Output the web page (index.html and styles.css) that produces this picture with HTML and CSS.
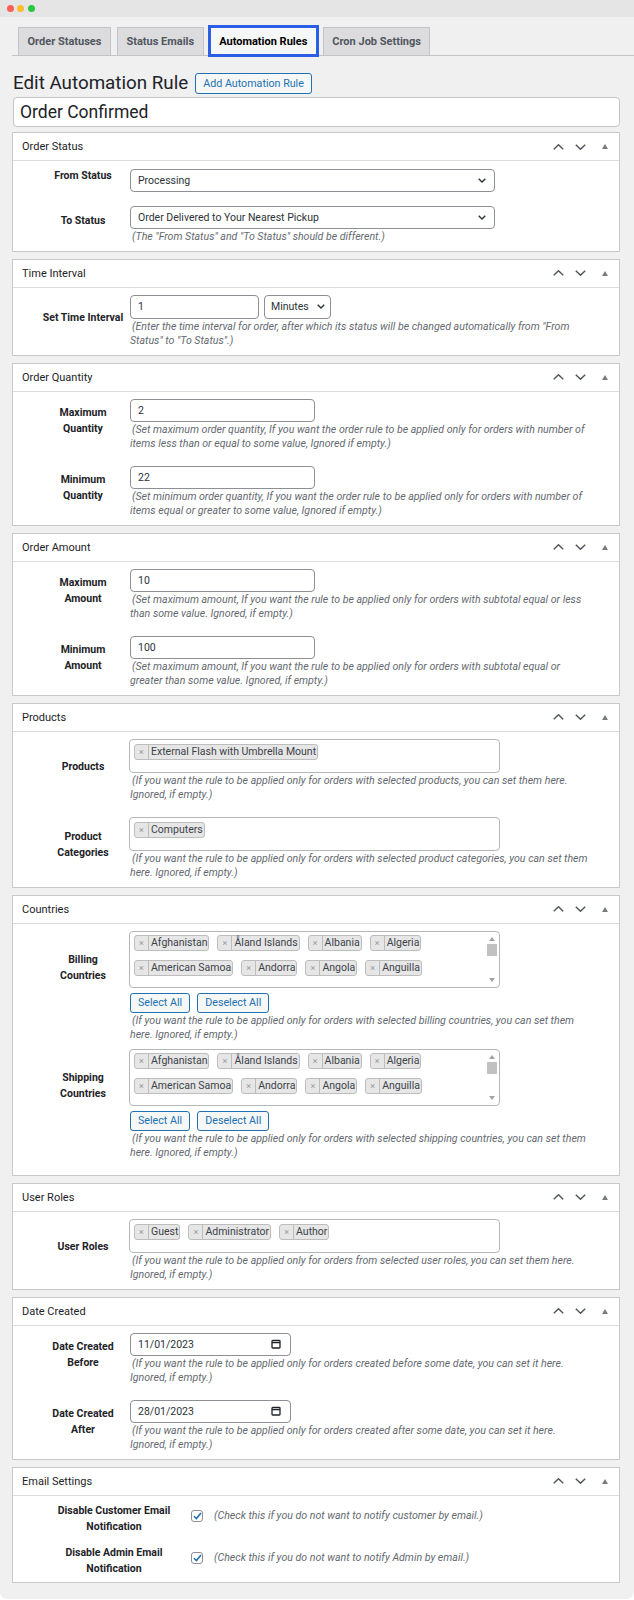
FILE: index.html
```html
<!DOCTYPE html>
<html>
  <head>
    <meta charset="UTF-8">
    <title>Edit Automation Rule</title>
    <link rel="stylesheet" href="styles.css">
  </head>
  <body>
    <div class="window">
      <div class="titlebar">
        <span class="light red"></span><span class="light yellow"></span><span class="light green"></span>
      </div>

      <div id="wpbody">
        <nav class="nav-tab-wrapper">
          <a class="nav-tab">Order Statuses</a>
          <a class="nav-tab">Status Emails</a>
          <a class="nav-tab nav-tab-active">Automation Rules</a>
          <a class="nav-tab">Cron Job Settings</a>
        </nav>

        <div class="page-title">
          <h1>Edit Automation Rule</h1>
          <a class="button">Add Automation Rule</a>
        </div>
        <input id="title" type="text" value="Order Confirmed">

        <!-- Order Status -->
        <div class="postbox">
          <div class="postbox-header">
            <h2>Order Status</h2>
            <div class="handle-actions">
              <svg class="arrow" width="11" height="6" viewBox="0 0 11 6"><path d="M0.8 5.3 5.5 0.8 10.2 5.3"/></svg>
              <svg class="arrow" width="11" height="6" viewBox="0 0 11 6"><path d="M0.8 0.7 5.5 5.2 10.2 0.7"/></svg>
              <svg class="toggle" width="6" height="5" viewBox="0 0 6 5"><path d="M0 5 3 0 6 5Z"/></svg>
            </div>
          </div>
          <div class="inside">
            <div class="field">
              <label class="field-label">From Status</label>
              <div class="field-control">
                <div class="select wide">
                  <select><option>Processing</option></select>
                  <svg width="8" height="5" viewBox="0 0 8 5"><path d="M0.7 0.7 4 4 7.3 0.7"/></svg>
                </div>
              </div>
            </div>
            <div class="field">
              <label class="field-label">To Status</label>
              <div class="field-control">
                <div class="select wide">
                  <select><option>Order Delivered to Your Nearest Pickup</option></select>
                  <svg width="8" height="5" viewBox="0 0 8 5"><path d="M0.7 0.7 4 4 7.3 0.7"/></svg>
                </div>
                <p class="description">(The "From Status" and "To Status" should be different.)</p>
              </div>
            </div>
          </div>
        </div>

        <!-- Time Interval -->
        <div class="postbox">
          <div class="postbox-header">
            <h2>Time Interval</h2>
            <div class="handle-actions">
              <svg class="arrow" width="11" height="6" viewBox="0 0 11 6"><path d="M0.8 5.3 5.5 0.8 10.2 5.3"/></svg>
              <svg class="arrow" width="11" height="6" viewBox="0 0 11 6"><path d="M0.8 0.7 5.5 5.2 10.2 0.7"/></svg>
              <svg class="toggle" width="6" height="5" viewBox="0 0 6 5"><path d="M0 5 3 0 6 5Z"/></svg>
            </div>
          </div>
          <div class="inside">
            <div class="field">
              <label class="field-label">Set Time Interval</label>
              <div class="field-control">
                <div class="inline">
                  <input class="text-input interval" type="text" value="1">
                  <div class="select units">
                    <select><option>Minutes</option></select>
                    <svg width="8" height="5" viewBox="0 0 8 5"><path d="M0.7 0.7 4 4 7.3 0.7"/></svg>
                  </div>
                </div>
                <p class="description">(Enter the time interval for order, after which its status will be changed automatically from "From Status" to "To Status".)</p>
              </div>
            </div>
          </div>
        </div>

        <!-- Order Quantity -->
        <div class="postbox">
          <div class="postbox-header">
            <h2>Order Quantity</h2>
            <div class="handle-actions">
              <svg class="arrow" width="11" height="6" viewBox="0 0 11 6"><path d="M0.8 5.3 5.5 0.8 10.2 5.3"/></svg>
              <svg class="arrow" width="11" height="6" viewBox="0 0 11 6"><path d="M0.8 0.7 5.5 5.2 10.2 0.7"/></svg>
              <svg class="toggle" width="6" height="5" viewBox="0 0 6 5"><path d="M0 5 3 0 6 5Z"/></svg>
            </div>
          </div>
          <div class="inside">
            <div class="field">
              <label class="field-label">Maximum<br>Quantity</label>
              <div class="field-control">
                <input class="text-input number" type="text" value="2">
                <p class="description">(Set maximum order quantity, If you want the order rule to be applied only for orders with number of items less than or equal to some value, Ignored if empty.)</p>
              </div>
            </div>
            <div class="field">
              <label class="field-label">Minimum<br>Quantity</label>
              <div class="field-control">
                <input class="text-input number" type="text" value="22">
                <p class="description">(Set minimum order quantity, If you want the order rule to be applied only for orders with number of items equal or greater to some value, Ignored if empty.)</p>
              </div>
            </div>
          </div>
        </div>

        <!-- Order Amount -->
        <div class="postbox">
          <div class="postbox-header">
            <h2>Order Amount</h2>
            <div class="handle-actions">
              <svg class="arrow" width="11" height="6" viewBox="0 0 11 6"><path d="M0.8 5.3 5.5 0.8 10.2 5.3"/></svg>
              <svg class="arrow" width="11" height="6" viewBox="0 0 11 6"><path d="M0.8 0.7 5.5 5.2 10.2 0.7"/></svg>
              <svg class="toggle" width="6" height="5" viewBox="0 0 6 5"><path d="M0 5 3 0 6 5Z"/></svg>
            </div>
          </div>
          <div class="inside">
            <div class="field">
              <label class="field-label">Maximum<br>Amount</label>
              <div class="field-control">
                <input class="text-input number" type="text" value="10">
                <p class="description">(Set maximum amount, If you want the rule to be applied only for orders with subtotal equal or less than some value. Ignored, if empty.)</p>
              </div>
            </div>
            <div class="field">
              <label class="field-label">Minimum<br>Amount</label>
              <div class="field-control">
                <input class="text-input number" type="text" value="100">
                <p class="description">(Set maximum amount, If you want the rule to be applied only for orders with subtotal equal or greater than some value. Ignored, if empty.)</p>
              </div>
            </div>
          </div>
        </div>

        <!-- Products -->
        <div class="postbox">
          <div class="postbox-header">
            <h2>Products</h2>
            <div class="handle-actions">
              <svg class="arrow" width="11" height="6" viewBox="0 0 11 6"><path d="M0.8 5.3 5.5 0.8 10.2 5.3"/></svg>
              <svg class="arrow" width="11" height="6" viewBox="0 0 11 6"><path d="M0.8 0.7 5.5 5.2 10.2 0.7"/></svg>
              <svg class="toggle" width="6" height="5" viewBox="0 0 6 5"><path d="M0 5 3 0 6 5Z"/></svg>
            </div>
          </div>
          <div class="inside">
            <div class="field">
              <label class="field-label">Products</label>
              <div class="field-control">
                <div class="multi">
                  <ul class="choices">
                    <li class="tag"><span class="tag-remove">×</span>External Flash with Umbrella Mount</li>
                  </ul>
                </div>
                <p class="description">(If you want the rule to be applied only for orders with selected products, you can set them here. Ignored, if empty.)</p>
              </div>
            </div>
            <div class="field">
              <label class="field-label">Product<br>Categories</label>
              <div class="field-control">
                <div class="multi">
                  <ul class="choices">
                    <li class="tag"><span class="tag-remove">×</span>Computers</li>
                  </ul>
                </div>
                <p class="description">(If you want the rule to be applied only for orders with selected product categories, you can set them here. Ignored, if empty.)</p>
              </div>
            </div>
          </div>
        </div>

        <!-- Countries -->
        <div class="postbox">
          <div class="postbox-header">
            <h2>Countries</h2>
            <div class="handle-actions">
              <svg class="arrow" width="11" height="6" viewBox="0 0 11 6"><path d="M0.8 5.3 5.5 0.8 10.2 5.3"/></svg>
              <svg class="arrow" width="11" height="6" viewBox="0 0 11 6"><path d="M0.8 0.7 5.5 5.2 10.2 0.7"/></svg>
              <svg class="toggle" width="6" height="5" viewBox="0 0 6 5"><path d="M0 5 3 0 6 5Z"/></svg>
            </div>
          </div>
          <div class="inside countries">
            <div class="field">
              <label class="field-label high">Billing<br>Countries</label>
              <div class="field-control">
                <div class="multi scroll">
                  <ul class="choices">
                    <li class="tag"><span class="tag-remove">×</span>Afghanistan</li>
                    <li class="tag"><span class="tag-remove">×</span>Åland Islands</li>
                    <li class="tag"><span class="tag-remove">×</span>Albania</li>
                    <li class="tag"><span class="tag-remove">×</span>Algeria</li>
                    <li class="tag"><span class="tag-remove">×</span>American Samoa</li>
                    <li class="tag"><span class="tag-remove">×</span>Andorra</li>
                    <li class="tag"><span class="tag-remove">×</span>Angola</li>
                    <li class="tag"><span class="tag-remove">×</span>Anguilla</li>
                  </ul>
                  <div class="scrollbar">
                    <svg width="6" height="4" viewBox="0 0 6 4"><path d="M0 4 3 0 6 4Z"/></svg>
                    <span class="thumb"></span>
                    <span class="track"></span>
                    <svg width="6" height="4" viewBox="0 0 6 4"><path d="M0 0 3 4 6 0Z"/></svg>
                  </div>
                </div>
                <div class="button-row">
                  <a class="button">Select All</a>
                  <a class="button">Deselect All</a>
                </div>
                <p class="description">(If you want the rule to be applied only for orders with selected billing countries, you can set them here. Ignored, if empty.)</p>
              </div>
            </div>
            <div class="field">
              <label class="field-label high">Shipping<br>Countries</label>
              <div class="field-control">
                <div class="multi scroll">
                  <ul class="choices">
                    <li class="tag"><span class="tag-remove">×</span>Afghanistan</li>
                    <li class="tag"><span class="tag-remove">×</span>Åland Islands</li>
                    <li class="tag"><span class="tag-remove">×</span>Albania</li>
                    <li class="tag"><span class="tag-remove">×</span>Algeria</li>
                    <li class="tag"><span class="tag-remove">×</span>American Samoa</li>
                    <li class="tag"><span class="tag-remove">×</span>Andorra</li>
                    <li class="tag"><span class="tag-remove">×</span>Angola</li>
                    <li class="tag"><span class="tag-remove">×</span>Anguilla</li>
                  </ul>
                  <div class="scrollbar">
                    <svg width="6" height="4" viewBox="0 0 6 4"><path d="M0 4 3 0 6 4Z"/></svg>
                    <span class="thumb"></span>
                    <span class="track"></span>
                    <svg width="6" height="4" viewBox="0 0 6 4"><path d="M0 0 3 4 6 0Z"/></svg>
                  </div>
                </div>
                <div class="button-row">
                  <a class="button">Select All</a>
                  <a class="button">Deselect All</a>
                </div>
                <p class="description">(If you want the rule to be applied only for orders with selected shipping countries, you can set them here. Ignored, if empty.)</p>
              </div>
            </div>
          </div>
        </div>

        <!-- User Roles -->
        <div class="postbox">
          <div class="postbox-header">
            <h2>User Roles</h2>
            <div class="handle-actions">
              <svg class="arrow" width="11" height="6" viewBox="0 0 11 6"><path d="M0.8 5.3 5.5 0.8 10.2 5.3"/></svg>
              <svg class="arrow" width="11" height="6" viewBox="0 0 11 6"><path d="M0.8 0.7 5.5 5.2 10.2 0.7"/></svg>
              <svg class="toggle" width="6" height="5" viewBox="0 0 6 5"><path d="M0 5 3 0 6 5Z"/></svg>
            </div>
          </div>
          <div class="inside">
            <div class="field">
              <label class="field-label">User Roles</label>
              <div class="field-control">
                <div class="multi">
                  <ul class="choices">
                    <li class="tag"><span class="tag-remove">×</span>Guest</li>
                    <li class="tag"><span class="tag-remove">×</span>Administrator</li>
                    <li class="tag"><span class="tag-remove">×</span>Author</li>
                  </ul>
                </div>
                <p class="description">(If you want the rule to be applied only for orders from selected user roles, you can set them here. Ignored, if empty.)</p>
              </div>
            </div>
          </div>
        </div>

        <!-- Date Created -->
        <div class="postbox">
          <div class="postbox-header">
            <h2>Date Created</h2>
            <div class="handle-actions">
              <svg class="arrow" width="11" height="6" viewBox="0 0 11 6"><path d="M0.8 5.3 5.5 0.8 10.2 5.3"/></svg>
              <svg class="arrow" width="11" height="6" viewBox="0 0 11 6"><path d="M0.8 0.7 5.5 5.2 10.2 0.7"/></svg>
              <svg class="toggle" width="6" height="5" viewBox="0 0 6 5"><path d="M0 5 3 0 6 5Z"/></svg>
            </div>
          </div>
          <div class="inside">
            <div class="field">
              <label class="field-label">Date Created<br>Before</label>
              <div class="field-control">
                <div class="date-input">
                  <span>11/01/2023</span>
                  <svg width="10" height="10" viewBox="0 0 10 10"><rect x="1" y="1.5" width="8" height="7.5" rx="0.8"/><path d="M1 3.6h8"/></svg>
                </div>
                <p class="description">(If you want the rule to be applied only for orders created before some date, you can set it here. Ignored, if empty.)</p>
              </div>
            </div>
            <div class="field">
              <label class="field-label">Date Created<br>After</label>
              <div class="field-control">
                <div class="date-input">
                  <span>28/01/2023</span>
                  <svg width="10" height="10" viewBox="0 0 10 10"><rect x="1" y="1.5" width="8" height="7.5" rx="0.8"/><path d="M1 3.6h8"/></svg>
                </div>
                <p class="description">(If you want the rule to be applied only for orders created after some date, you can set it here. Ignored, if empty.)</p>
              </div>
            </div>
          </div>
        </div>

        <!-- Email Settings -->
        <div class="postbox">
          <div class="postbox-header">
            <h2>Email Settings</h2>
            <div class="handle-actions">
              <svg class="arrow" width="11" height="6" viewBox="0 0 11 6"><path d="M0.8 5.3 5.5 0.8 10.2 5.3"/></svg>
              <svg class="arrow" width="11" height="6" viewBox="0 0 11 6"><path d="M0.8 0.7 5.5 5.2 10.2 0.7"/></svg>
              <svg class="toggle" width="6" height="5" viewBox="0 0 6 5"><path d="M0 5 3 0 6 5Z"/></svg>
            </div>
          </div>
          <div class="inside email">
            <div class="field check-row">
              <label class="field-label">Disable Customer Email<br>Notification</label>
              <div class="check-control">
                <span class="checkbox"><svg width="9" height="8" viewBox="0 0 9 8"><path d="M1 4.2 3.4 6.6 8 1"/></svg></span>
                <span class="description">(Check this if you do not want to notify customer by email.)</span>
              </div>
            </div>
            <div class="field check-row">
              <label class="field-label">Disable Admin Email<br>Notification</label>
              <div class="check-control">
                <span class="checkbox"><svg width="9" height="8" viewBox="0 0 9 8"><path d="M1 4.2 3.4 6.6 8 1"/></svg></span>
                <span class="description">(Check this if you do not want to notify Admin by email.)</span>
              </div>
            </div>
          </div>
        </div>

      </div>
    </div>
  </body>
</html>
```

FILE: styles.css
```css
body {
  margin: 0;
  background: #fff;
  font-family: Roboto, "Liberation Sans", Arial, sans-serif;
  color: #1d2327;
}
input, select {
  font-family: inherit;
}
.window {
  background: #f0f0f1;
  border-radius: 0 0 7px 7px;
  padding-bottom: 9px;
  overflow: hidden;
}
.titlebar {
  height: 17px;
  background: #e5e5e5;
  display: flex;
  align-items: center;
  gap: 3.5px;
  padding-left: 6.5px;
}
.light {
  width: 7px;
  height: 7px;
  border-radius: 50%;
}
.light.red { background: #fe5f57; }
.light.yellow { background: #febc2e; }
.light.green { background: #28c840; }

#wpbody {
  padding: 10px 14px 0 12px;
}

/* tabs */
.nav-tab-wrapper {
  display: flex;
  gap: 6px;
  padding-left: 6px;
  margin-right: -14px;
  border-bottom: 1px solid #c3c4c7;
}
.nav-tab {
  height: 27px;
  line-height: 27px;
  padding: 0 8.5px;
  border: 1px solid #c3c4c7;
  border-bottom: none;
  background: #dcdcde;
  color: #50575e;
  font-size: 11px;
  font-weight: 700;
}
.nav-tab-active {
  background: #f6f7f7;
  color: #000;
  outline: 3px solid #2d5ee6;
  outline-offset: -1px;
}

/* heading */
.page-title {
  display: flex;
  align-items: center;
  gap: 7px;
  margin-top: 17px;
  height: 21px;
}
h1 {
  margin: 0;
  padding-left: 1px;
  font-size: 18.8px;
  font-weight: 400;
  line-height: 21px;
}
.button {
  display: inline-block;
  box-sizing: border-box;
  height: 21px;
  line-height: 19px;
  padding: 0 7px;
  font-size: 10.7px;
  color: #2271b1;
  background: #f6f7f7;
  border: 1px solid #2271b1;
  border-radius: 3px;
  white-space: nowrap;
}
#title {
  display: block;
  box-sizing: border-box;
  width: calc(100% - 1px);
  height: 30px;
  margin: 3px 0 5px 1px;
  padding: 0 6px;
  font-size: 17.5px;
  color: #1d2327;
  background: #fff;
  border: 1px solid #c3c4c7;
  border-radius: 4px;
}

/* postboxes */
.postbox {
  background: #fff;
  border: 1px solid #c8c9cc;
  margin-bottom: 7px;
}
.postbox-header {
  height: 27px;
  display: flex;
  align-items: center;
  justify-content: space-between;
  padding: 0 11px 0 9px;
  border-bottom: 1px solid #dcdcde;
}
h2 {
  margin: 0;
  font-size: 11px;
  font-weight: 400;
}
.handle-actions {
  display: flex;
  align-items: center;
}
.handle-actions .arrow {
  fill: none;
  stroke: #50575e;
  stroke-width: 1.5;
}
.handle-actions .arrow + .arrow {
  margin-left: 11px;
}
.handle-actions .toggle {
  fill: #787c82;
  margin-left: 16px;
}
.inside {
  display: flex;
  flex-direction: column;
  gap: 14px;
  padding: 7px 30px 6px 27px;
}
.inside.countries {
  gap: 6px;
  padding-bottom: 14px;
}
.inside.email {
  gap: 10px;
  padding-bottom: 5px;
}
.field {
  display: grid;
  grid-template-columns: 86px 1fr;
  column-gap: 4px;
  align-items: center;
}
.field-label {
  padding-bottom: 8px;
  font-size: 10.5px;
  font-weight: 700;
  line-height: 16px;
  text-align: center;
}
.field-label.high {
  align-self: start;
  padding: 21px 0 0;
}
.description {
  margin: 1px 0 0;
  text-indent: 2px;
  font-size: 10.6px;
  font-style: italic;
  line-height: 14.5px;
  color: #646970;
}

/* controls */
.select {
  position: relative;
  width: 365px;
}
.select select {
  display: block;
  box-sizing: border-box;
  width: 100%;
  height: 23px;
  padding: 0 24px 0 7px;
  appearance: none;
  font-size: 10.5px;
  color: #2c3338;
  background: #fff;
  border: 1px solid #8c8f94;
  border-radius: 4px;
}
.select svg {
  position: absolute;
  right: 9px;
  top: 9px;
  fill: none;
  stroke: #2c3338;
  stroke-width: 1.4;
}
.select.units {
  width: 67px;
}
.select.units select {
  height: 24px;
  padding: 0 0 0 6px;
}
.select.units svg {
  right: 6px;
}
.inline {
  display: flex;
  gap: 5px;
}
.text-input {
  display: block;
  box-sizing: border-box;
  height: 23px;
  padding: 0 7px;
  font-size: 10.5px;
  color: #2c3338;
  background: #fff;
  border: 1px solid #8c8f94;
  border-radius: 4px;
}
.text-input.interval {
  width: 129px;
  height: 24px;
}
.text-input.number {
  width: 185px;
}
.date-input {
  display: flex;
  align-items: center;
  justify-content: space-between;
  box-sizing: border-box;
  width: 161px;
  height: 23px;
  padding: 0 9px 0 7px;
  font-size: 10.5px;
  color: #2c3338;
  background: #fff;
  border: 1px solid #8c8f94;
  border-radius: 4px;
}
.date-input svg {
  fill: none;
  stroke: #1d2327;
  stroke-width: 1.3;
}

/* select2-ish multi selects */
.multi {
  display: flex;
  box-sizing: border-box;
  width: 371px;
  min-height: 34px;
  margin-left: -1px;
  padding: 4px;
  background: #fff;
  border: 1px solid #b4b6b9;
  border-radius: 4px;
}
.multi.scroll {
  height: 57px;
  padding: 3px 1px 3px 4px;
}
.choices {
  flex: 1;
  display: flex;
  flex-wrap: wrap;
  align-content: flex-start;
  gap: 9px 8px;
  margin: 0;
  padding: 0;
  list-style: none;
}
.tag {
  display: inline-flex;
  align-items: center;
  box-sizing: border-box;
  height: 16px;
  padding-right: 1px;
  font-size: 10.5px;
  color: #3c434a;
  background: #e6e6e6;
  border: 1px solid #bdbdbd;
  border-radius: 3px;
  white-space: nowrap;
}
.tag-remove {
  align-self: stretch;
  display: flex;
  align-items: center;
  justify-content: center;
  width: 13px;
  margin-right: 2px;
  font-size: 9px;
  color: #999;
  border-right: 1px solid #bdbdbd;
}
.scrollbar {
  width: 12px;
  display: flex;
  flex-direction: column;
  align-items: center;
  gap: 3px;
  padding: 2px 0;
  fill: #a3a3a3;
}
.scrollbar .thumb {
  width: 10px;
  height: 12px;
  background: #c1c1c1;
}
.scrollbar .track {
  flex: 1;
}
.button-row {
  display: flex;
  gap: 7px;
  margin-top: 5px;
}
.button-row .button {
  height: 20px;
  line-height: 18px;
}

/* email settings */
.field.check-row {
  grid-template-columns: 148px 1fr;
  column-gap: 3px;
  align-items: start;
}
.check-row .field-label {
  padding-bottom: 0;
}
.check-control {
  display: flex;
  align-items: center;
  gap: 11px;
  margin-top: 6px;
}
.check-control .description {
  margin: 0;
  text-indent: 0;
}
.checkbox {
  display: flex;
  align-items: center;
  justify-content: center;
  box-sizing: border-box;
  width: 12px;
  height: 12px;
  background: #fff;
  border: 1px solid #8c8f94;
  border-radius: 3px;
}
.checkbox svg {
  fill: none;
  stroke: #2271b1;
  stroke-width: 1.6;
}
```
